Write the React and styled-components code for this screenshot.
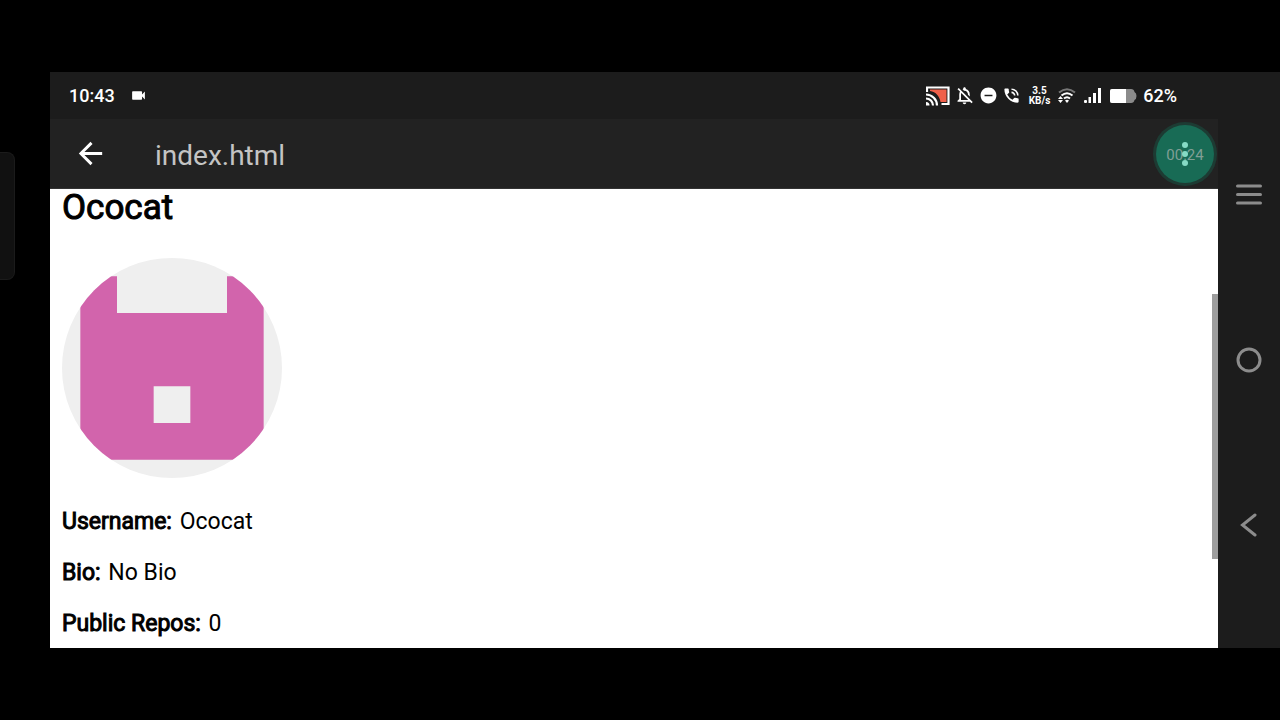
import React from "react";
import styled, { createGlobalStyle } from "styled-components";
import {
  MdArrowBack,
  MdDoNotDisturbOn,
  MdOutlineNotificationsOff,
  MdPhoneInTalk,
  MdVideocam,
} from "react-icons/md";

const profile = [
  { label: "Username:", value: "Ococat" },
  { label: "Bio:", value: "No Bio" },
  { label: "Public Repos:", value: "0" },
];

// ---- status bar drawings ----

const CastIcon = () => (
  <svg width="24" height="20" viewBox="0 0 24 20" fill="none">
    <path d="M4 3.500H20.500V16H14.500C13.500 10 10 6 4 5Z" fill="#f0604a" />
    <path d="M1 6V1.500H22.500V18H15.500" stroke="#fff" strokeWidth="2.200" />
    <path
      d="M0 8.500A11 11 0 0 1 11 19.500M0 12.500A7 7 0 0 1 7 19.500"
      stroke="#fff"
      strokeWidth="2.200"
    />
    <path d="M0 16A3.500 3.500 0 0 1 3.500 19.500H0Z" fill="#fff" />
  </svg>
);

const WifiIcon = () => (
  <svg width="18" height="16" viewBox="0 0 18 16" fill="none">
    <path d="M1 4.500Q9 -2 17 4.500" stroke="#777" strokeWidth="2" />
    <path d="M3.500 7.500Q9 3 14.500 7.500" stroke="#fff" strokeWidth="2" />
    <path d="M6 10.500Q9 8 12 10.500" stroke="#fff" strokeWidth="2" />
    <path d="M7 12.500Q9 11 11 12.500L9 15Z" fill="#fff" />
    <path d="M2.500 8L5 11H0ZM2.500 15L5 12H0Z" fill="#fff" />
  </svg>
);

const SignalIcon = () => (
  <svg width="18" height="16" viewBox="0 0 18 16" fill="#fff">
    <rect x="0" y="12" width="3" height="3" rx="1" />
    <rect x="4.500" y="9" width="2.500" height="6" />
    <rect x="9" y="5" width="3" height="10" />
    <rect x="14" y="0" width="3" height="15" />
  </svg>
);

const BatteryIcon = () => (
  <svg width="27" height="14" viewBox="0 0 27 14">
    <path
      d="M2 0H21Q24 0 24.500 3Q26.500 4 26.500 7T24.500 11Q24 14 21 14H2Q0 14 0 12V2Q0 0 2 0Z"
      fill="#8b8b8b"
    />
    <path d="M16 0H2Q0 0 0 2V12Q0 14 2 14H16Z" fill="#fff" />
  </svg>
);

const Identicon = () => (
  <svg width="100%" height="100%" viewBox="0 0 12 12">
    <rect width="12" height="12" fill="#efefef" />
    <path d="M1 1H3V3H9V1H11V11H1ZM5 7V9H7V7Z" fill="#d264ac" fillRule="evenodd" />
  </svg>
);

const App = () => (
  <>
    <GlobalStyle />
    <Stage>
      <Gutter>
        <EdgeHandle />
      </Gutter>
      <Screen>
        <StatusBar>
          <StatusGroup $gap={15}>
            <Clock>10:43</Clock>
            <MdVideocam size={17} />
          </StatusGroup>
          <StatusGroup $gap={8}>
            <StatusGroup $gap={4}>
              <CastIcon />
              <MdOutlineNotificationsOff size={21} />
              <MdDoNotDisturbOn size={19} />
              <MdPhoneInTalk size={19} />
            </StatusGroup>
            <Speed>
              <span>3.5</span>
              <span>KB/s</span>
            </Speed>
            <WifiIcon />
            <SignalIcon />
            <StatusGroup $gap={6}>
              <BatteryIcon />
              <Clock>62%</Clock>
            </StatusGroup>
          </StatusGroup>
        </StatusBar>
        <AppBar>
          <IconButton aria-label="Back">
            <MdArrowBack size={35} />
          </IconButton>
          <FileName>index.html</FileName>
          <MoreButton aria-label="More options">
            <Timer>00:24</Timer>
            <Dots viewBox="0 0 6 24">
              <circle cx="3" cy="3" r="3" />
              <circle cx="3" cy="12" r="3" />
              <circle cx="3" cy="21" r="3" />
            </Dots>
          </MoreButton>
        </AppBar>
        <Page>
          <Name>Ococat</Name>
          <Avatar>
            <Identicon />
          </Avatar>
          <Details>
            {profile.map(({ label, value }) => (
              <p key={label}>
                <strong>{label}</strong> {value}
              </p>
            ))}
          </Details>
          <ScrollThumb />
        </Page>
      </Screen>
      <NavRail>
        <IconButton aria-label="Recent apps">
          <svg width="28" height="22" viewBox="0 0 28 22" {...navStroke}>
            <path d="M2.500 2H25.500M2.500 10.500H25.500M2.500 19H25.500" />
          </svg>
        </IconButton>
        <IconButton aria-label="Home">
          <svg width="28" height="28" viewBox="0 0 28 28" {...navStroke}>
            <circle cx="14" cy="14" r="11" />
          </svg>
        </IconButton>
        <IconButton aria-label="Back">
          <svg width="28" height="24" viewBox="0 0 28 24" {...navStroke}>
            <path d="M20 2L7.500 12L20 22" />
          </svg>
        </IconButton>
      </NavRail>
    </Stage>
  </>
);

const navStroke = {
  fill: "none",
  stroke: "#8c8c8c",
  strokeWidth: 3,
  strokeLinecap: "round",
};

const GlobalStyle = createGlobalStyle`
  * {
    box-sizing: border-box;
  }
  body {
    margin: 0;
    background: #000;
    font-family: Roboto, "Liberation Sans", sans-serif;
  }
  h1, h2, p {
    margin: 0;
  }
  svg {
    display: block;
    flex-shrink: 0;
  }
`;

const Stage = styled.div`
  display: flex;
  min-height: 100vh;
  padding: 72px 0;
  background: #000;
`;

const Gutter = styled.div`
  width: 50px;
  flex-shrink: 0;
  padding-top: 80px;
`;

const EdgeHandle = styled.div`
  width: 15px;
  height: 128px;
  background: #111;
  border: 1px solid #1b1b1b;
  border-left: 0;
  border-radius: 0 8px 8px 0;
`;

const Screen = styled.main`
  display: flex;
  flex: 1;
  flex-direction: column;
  min-width: 0;
`;

const StatusBar = styled.header`
  display: flex;
  align-items: center;
  justify-content: space-between;
  height: 47px;
  padding: 0 41px 0 19px;
  background: #1c1c1c;
  color: #fff;
`;

const StatusGroup = styled.div`
  display: flex;
  align-items: center;
  gap: ${({ $gap }) => $gap}px;
`;

const Clock = styled.span`
  font-size: 18px;
  font-weight: 500;
  line-height: 20px;
`;

const Speed = styled.div`
  display: flex;
  flex-direction: column;
  align-items: center;
  font-size: 10px;
  font-weight: 700;
  line-height: 10px;
`;

const AppBar = styled.div`
  display: flex;
  align-items: center;
  height: 70px;
  padding: 0 4px 0 20px;
  background: #222;
  border-bottom: 1px solid #333;
  color: #fff;
`;

const IconButton = styled.button`
  display: flex;
  align-items: center;
  justify-content: center;
  width: 40px;
  height: 40px;
  padding: 0;
  border: 0;
  background: none;
  color: inherit;
`;

const FileName = styled.h1`
  flex: 1;
  margin-left: 45px;
  padding-top: 4px;
  color: #c4c4c4;
  font-size: 28px;
  font-weight: 400;
  line-height: 32px;
`;

const MoreButton = styled.button`
  position: relative;
  display: flex;
  align-items: center;
  justify-content: center;
  width: 58px;
  height: 58px;
  padding: 0;
  border: 0;
  border-radius: 50%;
  background: #186b55;
  box-shadow: 0 0 0 3px #1d3b33;
  font-family: inherit;
`;

const Timer = styled.span`
  padding-top: 2px;
  color: #809f95;
  font-size: 15px;
`;

/* the menu dots show through the timer */
const Dots = styled.svg`
  position: absolute;
  inset: 0;
  width: 6px;
  height: 24px;
  margin: auto;
  fill: #86dac5;
`;

const Page = styled.section`
  position: relative;
  display: flex;
  flex: 1;
  flex-direction: column;
  padding: 0 12px 11px;
  background: #fff;
  color: #000;
`;

const Name = styled.h2`
  font-size: 35px;
  font-weight: 400;
  line-height: 38px;
  -webkit-text-stroke: 1px #000;
`;

const Avatar = styled.div`
  width: 220px;
  height: 220px;
  margin: 31px 0 30px;
  overflow: hidden;
  border-radius: 50%;
`;

const Details = styled.div`
  display: flex;
  flex-direction: column;
  gap: 24px;
  font-size: 23px;
  line-height: 27px;

  strong {
    margin-right: 2px;
    font-weight: 400;
    -webkit-text-stroke: 1px #000;
  }
`;

const ScrollThumb = styled.div`
  position: absolute;
  top: 105px;
  right: 0;
  width: 6px;
  height: 265px;
  background: #9d9d9d;
`;

const NavRail = styled.nav`
  display: flex;
  flex-direction: column;
  align-items: center;
  justify-content: space-around;
  width: 62px;
  flex-shrink: 0;
  padding: 40px 0;
  background: #1c1c1c;
`;

export default App;
